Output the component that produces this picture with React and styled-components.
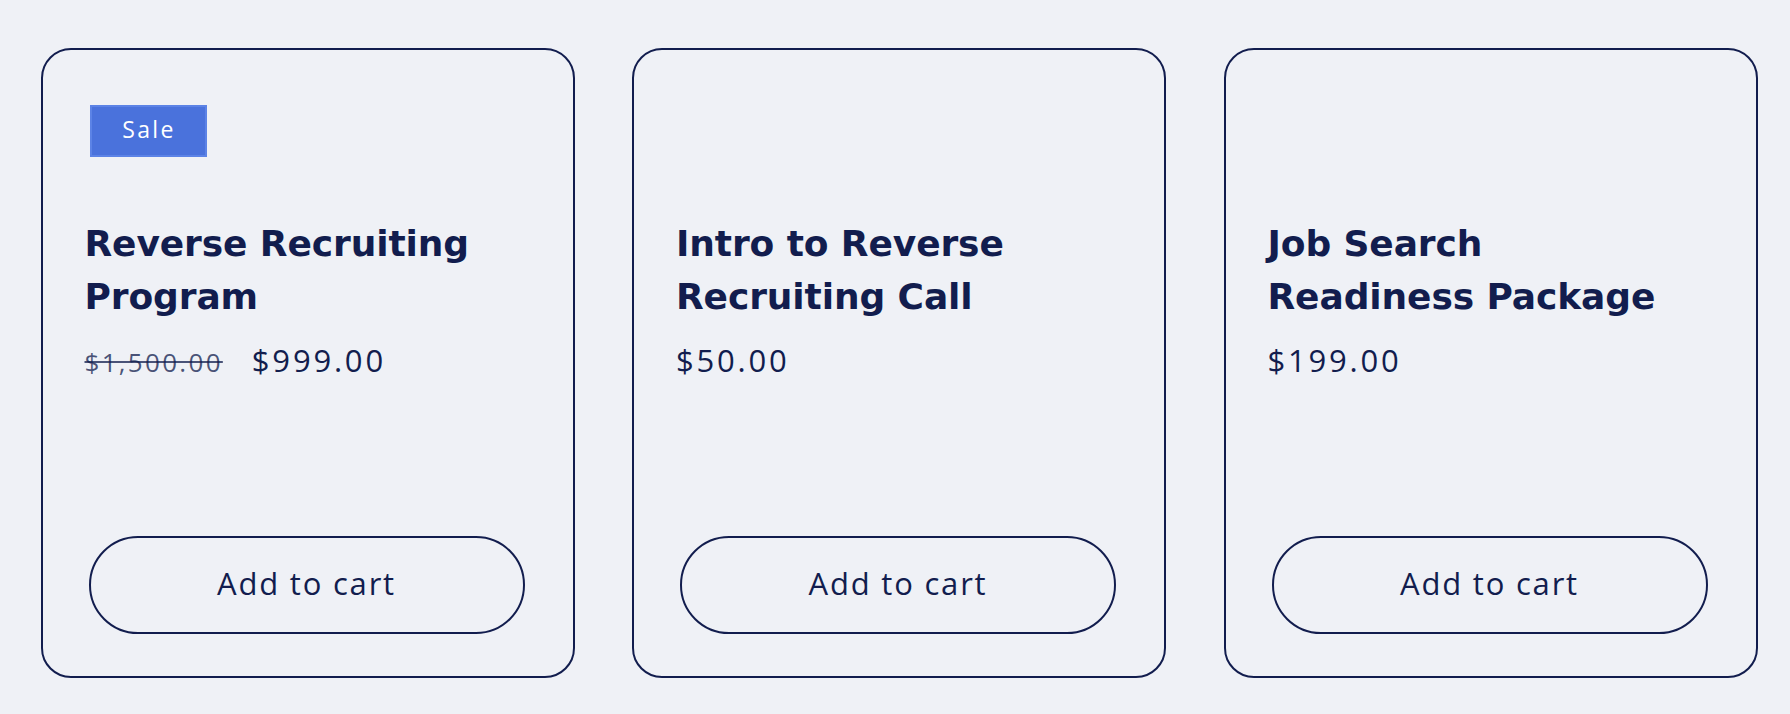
import styled, { createGlobalStyle } from "styled-components";

const NAVY = "#121d4e";

const GlobalStyle = createGlobalStyle`
  html, body {
    margin: 0;
    padding: 0;
    background: #eff1f6;
  }
  body {
    font-family: "Open Sans", "Liberation Sans", sans-serif;
    color: ${NAVY};
  }
`;

const Grid = styled.div`
  display: grid;
  grid-template-columns: repeat(3, 534px);
  column-gap: 57.5px;
  padding: 48px 0 0 40.5px;
`;

const Card = styled.div`
  box-sizing: border-box;
  height: 630px;
  border: 2px solid ${NAVY};
  border-radius: 30px;
  padding: 55px 44px 42px 42px;
  display: flex;
  flex-direction: column;
`;

// reserves the badge's height even when a card has no badge
const BadgeSlot = styled.div`
  height: 52px;
  padding-left: 5px;
`;

const Badge = styled.span`
  box-sizing: border-box;
  display: inline-flex;
  align-items: center;
  justify-content: center;
  width: 117px;
  height: 52px;
  background: #4a72dc;
  border: 2px solid #5c83e6;
  color: #ffffff;
  font-size: 23px;
  letter-spacing: 2.4px;
  padding: 0 0 4px 2px;
`;

const Title = styled.h3`
  margin: 60px 0 0;
  max-width: 420px;
  font-family: "DejaVu Sans", sans-serif;
  font-weight: 700;
  font-size: 36px;
  line-height: 53px;
  letter-spacing: -0.1px;
  color: ${NAVY};
`;

const PriceRow = styled.div`
  display: flex;
  align-items: baseline;
  gap: 29px;
  margin-top: 17px;
  line-height: 40px;
`;

const OldPrice = styled.s`
  font-size: 26px;
  letter-spacing: 2.3px;
  color: rgba(18, 29, 78, 0.75);
`;

const Price = styled.span`
  font-size: 31px;
  letter-spacing: 2.8px;
`;

const CartButton = styled.button`
  box-sizing: border-box;
  margin-top: auto;
  margin-left: 4px;
  width: 436px;
  height: 98px;
  border: 2px solid ${NAVY};
  border-radius: 49px;
  background: transparent;
  color: ${NAVY};
  font-family: "Open Sans", "Liberation Sans", sans-serif;
  font-size: 31px;
  letter-spacing: 1.8px;
  padding: 0 0 4px;
  cursor: pointer;
`;

const products = [
  {
    title: "Reverse Recruiting Program",
    price: "$999.00",
    oldPrice: "$1,500.00",
    sale: true,
  },
  { title: "Intro to Reverse Recruiting Call", price: "$50.00" },
  { title: "Job Search Readiness Package", price: "$199.00" },
];

export default function App() {
  return (
    <>
      <GlobalStyle />
      <Grid>
        {products.map((p) => (
          <Card key={p.title}>
            <BadgeSlot>{p.sale && <Badge>Sale</Badge>}</BadgeSlot>
            <Title>{p.title}</Title>
            <PriceRow>
              {p.oldPrice && <OldPrice>{p.oldPrice}</OldPrice>}
              <Price>{p.price}</Price>
            </PriceRow>
            <CartButton>Add to cart</CartButton>
          </Card>
        ))}
      </Grid>
    </>
  );
}
